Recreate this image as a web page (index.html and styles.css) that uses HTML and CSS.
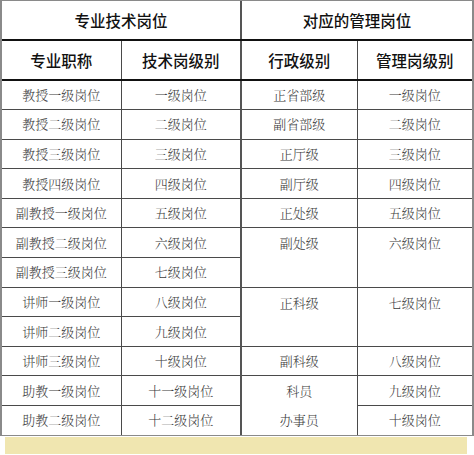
FILE: index.html
```html
<!DOCTYPE html>
<html lang="zh-CN">
<head>
<meta charset="utf-8">
<link rel="stylesheet" href="styles.css">
</head>
<body>
<div class="frame">
<table class="grid">
<colgroup><col class="c1"><col class="c2"><col class="c3"><col class="c4"></colgroup>
<thead>
<tr class="h1"><th colspan="2">专业技术岗位</th><th colspan="2" class="mid">对应的管理岗位</th></tr>
<tr class="h2"><th>专业职称</th><th>技术岗级别</th><th class="mid">行政级别</th><th>管理岗级别</th></tr>
</thead>
<tbody>
<tr><td>教授一级岗位</td><td>一级岗位</td><td class="mid">正省部级</td><td>一级岗位</td></tr>
<tr><td>教授二级岗位</td><td>二级岗位</td><td class="mid">副省部级</td><td>二级岗位</td></tr>
<tr><td>教授三级岗位</td><td>三级岗位</td><td class="mid">正厅级</td><td>三级岗位</td></tr>
<tr><td>教授四级岗位</td><td>四级岗位</td><td class="mid">副厅级</td><td>四级岗位</td></tr>
<tr><td>副教授一级岗位</td><td>五级岗位</td><td class="mid">正处级</td><td>五级岗位</td></tr>
<tr><td>副教授二级岗位</td><td>六级岗位</td><td rowspan="2" class="mid top">副处级</td><td rowspan="2" class="top">六级岗位</td></tr>
<tr><td>副教授三级岗位</td><td>七级岗位</td></tr>
<tr><td>讲师一级岗位</td><td>八级岗位</td><td rowspan="2" class="mid top">正科级</td><td rowspan="2" class="top">七级岗位</td></tr>
<tr><td>讲师二级岗位</td><td>九级岗位</td></tr>
<tr><td>讲师三级岗位</td><td>十级岗位</td><td class="mid">副科级</td><td>八级岗位</td></tr>
<tr><td>助教一级岗位</td><td>十一级岗位</td><td rowspan="2" class="mid stack"><div class="line">科员</div><div class="line">办事员</div></td><td>九级岗位</td></tr>
<tr><td>助教二级岗位</td><td>十二级岗位</td><td>十级岗位</td></tr>
</tbody>
</table>
</div>
<div class="band"></div>
</body>
</html>
```
FILE: styles.css
```css
html, body {
  margin: 0;
  padding: 0;
  background: #fff;
}
body {
  font-family: "Noto Serif CJK SC", "Noto Sans CJK SC", sans-serif;
  width: 474px;
  height: 455px;
  overflow: hidden;
}
.frame {
  width: 470px;
  border-style: solid;
  border-color: #8a8a8a;
  border-width: 1px 2px 1px 2px;
}
.grid {
  width: 470px;
  table-layout: fixed;
  border-collapse: collapse;
  border-style: hidden;
}
.c1 { width: 119px; }
.c2 { width: 120px; }
.c3 { width: 116px; }
.c4 { width: 115px; }
.grid th, .grid td {
  border: 1px solid #4a4a4a;
  padding: 0;
  text-align: center;
}
.grid th {
  font-family: "Noto Sans CJK SC", sans-serif;
  font-weight: 500;
  font-size: 15.5px;
  line-height: 20px;
  color: #111;
  border-bottom: 2px solid #111;
}
.h1 th { height: 38px; }
.h2 th { height: 37.5px; }
.grid td {
  height: 28.6px;
  font-size: 13px;
  font-weight: 300;
  color: #3c3c3c;
  line-height: 28px;
}
.grid .mid {
  border-left: 2px solid #555;
}
.grid td.top {
  vertical-align: top;
  padding-top: 1px;
}
.grid td.stack {
  vertical-align: top;
}
.line {
  height: 29px;
  line-height: 29px;
}
.band {
  margin: 1px 0 0 5px;
  width: 462px;
  height: 17px;
  background: #f0e6b0;
}
```
